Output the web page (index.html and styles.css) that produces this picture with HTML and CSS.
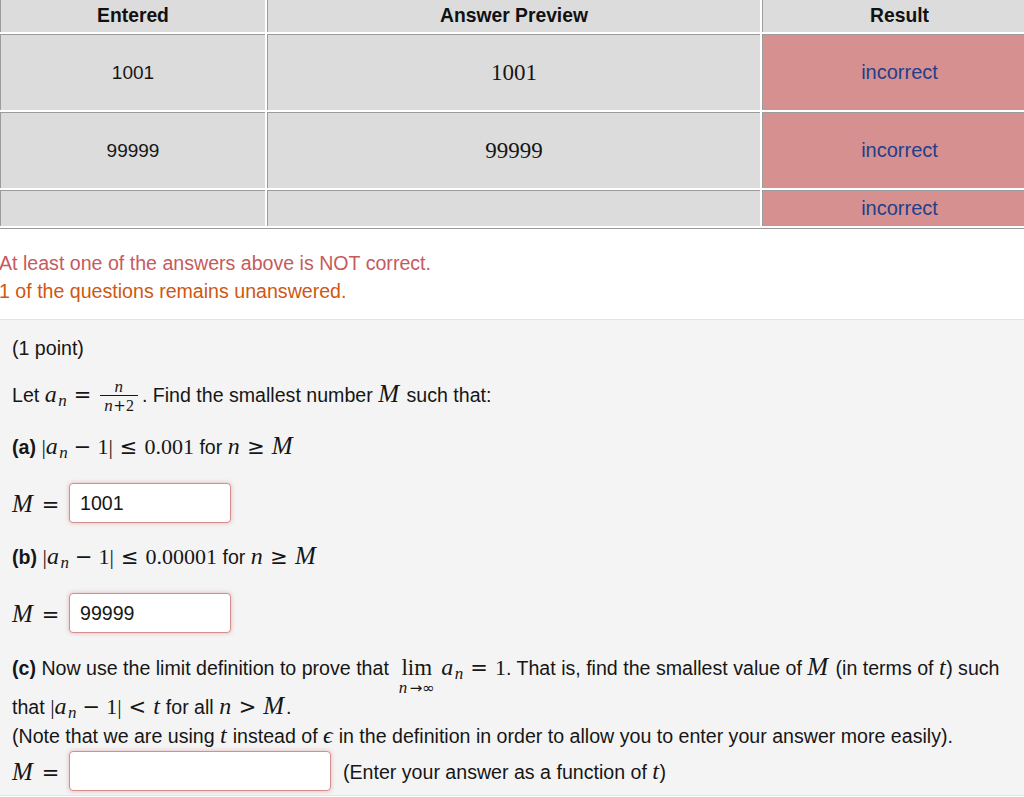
FILE: index.html
```html
<!DOCTYPE html>
<html>
<head>
<meta charset="utf-8">
<title>Attempt results</title>
<link rel="stylesheet" href="styles.css">
</head>
<body>
<div class="results">
  <table class="attempts">
    <thead>
      <tr class="head"><th class="c1">Entered</th><th class="c2">Answer Preview</th><th class="c3">Result</th></tr>
    </thead>
    <tbody>
      <tr class="tall"><td>1001</td><td class="preview">1001</td><td class="bad">incorrect</td></tr>
      <tr class="tall"><td>99999</td><td class="preview">99999</td><td class="bad">incorrect</td></tr>
      <tr class="short"><td></td><td></td><td class="bad">incorrect</td></tr>
    </tbody>
  </table>
</div>

<div class="messages">
  <div class="msg-bad">At least one of the answers above is NOT correct.</div>
  <div class="msg-warn">1 of the questions remains unanswered.</div>
</div>

<div class="problem">
  <div class="line l-point">(1 point)</div>

  <div class="line l-let">Let <span class="m"><span class="mi">a</span><span class="sub">n</span><span class="op rel">=</span><span class="frac"><span class="num mi">n</span><span class="den"><span class="mi">n</span><span class="op">+</span>2</span></span></span>. Find the smallest number <span class="m"><span class="mi mM">M</span></span> such that:</div>

  <div class="line l-part"><b>(a)</b> <span class="m">|<span class="mi">a</span><span class="sub">n</span><span class="op bin">−</span>1|<span class="op rel">≤</span>0.001</span> for <span class="m"><span class="mi">n</span><span class="op rel">≥</span><span class="mi mM">M</span></span></div>

  <div class="ans-row r-a"><span class="m lhs"><span class="mi mM">M</span><span class="op rel">=</span></span><input class="ans" type="text" value="1001" readonly></div>

  <div class="line l-part2"><b>(b)</b> <span class="m">|<span class="mi">a</span><span class="sub">n</span><span class="op bin">−</span>1|<span class="op rel">≤</span>0.00001</span> for <span class="m"><span class="mi">n</span><span class="op rel">≥</span><span class="mi mM">M</span></span></div>

  <div class="ans-row r-b"><span class="m lhs"><span class="mi mM">M</span><span class="op rel">=</span></span><input class="ans" type="text" value="99999" readonly></div>

  <div class="line l-c1"><b>(c)</b> Now use the limit definition to prove that <span class="m"><span class="lim"><span class="lim-top">lim</span><span class="lim-under"><span class="mi">n</span><span class="arrow">→∞</span></span></span><span class="mi">a</span><span class="sub">n</span><span class="op rel">=</span>1</span>. That is, find the smallest value of <span class="m"><span class="mi mM">M</span></span> (in terms of <span class="m"><span class="mi">t</span></span>) such</div>
  <div class="line l-c2">that <span class="m">|<span class="mi">a</span><span class="sub">n</span><span class="op bin">−</span>1|<span class="op rel">&lt;</span><span class="mi">t</span></span> for all <span class="m"><span class="mi">n</span><span class="op rel">&gt;</span><span class="mi mM">M</span></span>.</div>
  <div class="line l-c3">(Note that we are using <span class="m"><span class="mi">t</span></span> instead of <span class="m"><span class="mi">ϵ</span></span> in the definition in order to allow you to enter your answer more easily).</div>

  <div class="ans-row r-c"><span class="m lhs"><span class="mi mM">M</span><span class="op rel">=</span></span><input class="ans wide" type="text" value="" readonly><span class="hint">(Enter your answer as a function of <span class="m"><span class="mi">t</span></span>)</span></div>
</div>
</body>
</html>
```

FILE: styles.css
```css
html, body {
  margin: 0;
  padding: 0;
  background: #ffffff;
}
body {
  font-family: "Liberation Sans", Arial, sans-serif;
  font-size: 19.6px;
  color: #151515;
  overflow: hidden;
}

/* ---------- results table ---------- */
.results {
  width: 1024px;
  overflow: hidden;
}
.attempts {
  border-collapse: separate;
  border-spacing: 2px;
  margin: -3px 0 0 -2px;
  table-layout: fixed;
  width: 1040px;
  border-bottom: 1px solid #9a9a9a;
}
.attempts th,
.attempts td {
  box-sizing: border-box;
  background: #dcdcdc;
  border-top: 1px solid #9c9c9c;
  border-left: 1px solid #9c9c9c;
  padding: 0;
  text-align: center;
  vertical-align: middle;
  font-size: 19px;
  color: #161616;
}
.attempts th {
  font-weight: bold;
  font-size: 19.3px;
  color: #111;
}
.attempts .c1 { width: 265px; }
.attempts .c2 { width: 493px; }
.attempts .c3 { width: 274px; }
.attempts tr.head { height: 33px; }
.attempts tr.tall { height: 76px; }
.attempts tr.short { height: 36px; }
.attempts td.preview {
  font-family: "Liberation Serif", "Times New Roman", serif;
  font-size: 23px;
}
.attempts td.bad {
  background: #d6908f;
  color: #1d3f8c;
  font-size: 20px;
}

/* ---------- messages ---------- */
.messages {
  padding: 20px 0 14px;
  line-height: 28px;
  margin-left: -1px;
}
.msg-bad { color: #c65a5c; }
.msg-warn { color: #cf5711; }

/* ---------- problem ---------- */
.problem {
  background: #f4f4f4;
  border-top: 1px solid #e3e3e3;
  border-bottom: 1px solid #e6e6e6;
  padding: 14px 12px 4px;
  color: #161616;
}
.line {
  height: 28px;
  line-height: 28px;
  white-space: nowrap;
}
.l-let { margin-top: 19px; }
.l-part { margin-top: 24px; }
.r-a { margin-top: 22px; }
.l-part2 { margin-top: 20px; }
.r-b { margin-top: 22px; }
.l-c1 { margin-top: 21px; height: 39px; }
.l-c2 { height: 29px; }
.l-c3 { height: 29px; }
.r-c { margin-top: 0; }

/* math */
.m {
  font-family: "Liberation Serif", "Times New Roman", serif;
  font-size: 22px;
  line-height: 1;
  color: #161616;
}
.mi {
  font-style: italic;
  font-size: 24px;
  letter-spacing: 0.5px;
}
.mM {
  font-size: 25px;
  letter-spacing: 2px;
}
.op {
  font-family: "DejaVu Sans", sans-serif;
  font-size: 21px;
}
.sub {
  font-style: italic;
  font-size: 17px;
  vertical-align: -4px;
  line-height: 0;
  margin-left: 1px;
}
.rel { margin: 0 7px; }
.bin { margin: 0 6px; }
.frac {
  display: inline-flex;
  flex-direction: column;
  align-items: center;
  vertical-align: 10px;
  font-size: 16px;
  line-height: 1;
  margin: -8px 4px -8px 2px;
}
.frac .mi { font-size: 17px; }
.frac .op { font-size: 15px; }
.frac .num { padding: 0 3px 0; }
.frac .den {
  border-top: 1px solid #161616;
  padding: 1px 4px 0;
}
.lim {
  display: inline-flex;
  flex-direction: column;
  align-items: center;
  line-height: 1;
  margin: 0 0.3em 0 0.2em;
}
.lim-top { font-size: 23px; }
.lim-under {
  font-size: 16px;
  margin-top: 0;
  white-space: nowrap;
}
.lim-under .mi { font-size: 17px; margin-right: 2px; }
.lim-under .arrow {
  font-family: "DejaVu Sans", sans-serif;
  font-size: 15px;
}

/* answer rows */
.ans-row {
  display: flex;
  align-items: center;
  height: 40px;
}
.lhs {
  display: inline-block;
  width: 57px;
}
.lhs .rel { margin-right: 0; }
.ans {
  box-sizing: border-box;
  width: 162px;
  height: 40px;
  margin: 0;
  padding: 0 10px;
  border: 1px solid #d58e90;
  border-radius: 4px;
  background: #ffffff;
  box-shadow: 0 0 4px rgba(205, 100, 100, 0.45);
  font-family: "Liberation Sans", Arial, sans-serif;
  font-size: 19.6px;
  color: #161616;
  outline: none;
}
.ans.wide { width: 262px; }
.hint {
  margin-left: 12px;
  white-space: nowrap;
}
```
